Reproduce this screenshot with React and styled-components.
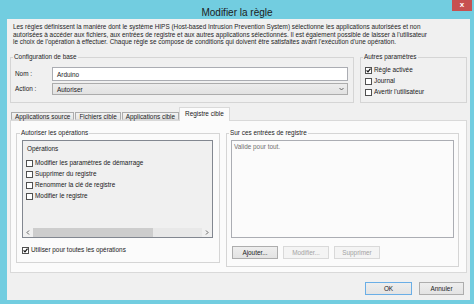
import React from "react";
import styled, { createGlobalStyle } from "styled-components";

const Global = createGlobalStyle`
  html, body { margin: 0; padding: 0; background: #72cde0; }
  #root { width: 474px; height: 304px; }
`;

const FONT = `"Liberation Sans", Arial, sans-serif`;

const Window = styled.div`
  width: 474px;
  height: 304px;
  box-sizing: border-box;
  background: #72cde0;
  display: flex;
  flex-direction: column;
  font-family: ${FONT};
  font-size: 6.4px;
  color: #1a1a1a;
`;

const TitleBar = styled.div`
  height: 19px;
  flex: none;
  display: grid;
  grid-template-columns: 1fr auto 1fr;
  align-items: start;
`;

const Title = styled.div`
  grid-column: 2;
  padding-top: 7px;
  font-size: 10px;
  line-height: 11px;
  color: #1c1c1c;
`;

const Close = styled.div`
  grid-column: 3;
  justify-self: end;
  margin-right: 2px;
  width: 20px;
  height: 11px;
  background: #c75050;
  color: #fff;
  font-size: 8px;
  font-weight: bold;
  line-height: 10px;
  text-align: center;
`;

const Body = styled.div`
  flex: 1;
  margin: 0 4px 4px 7px;
  background: #f0f0f0;
  padding: 4px 3px 0 3px;
  display: flex;
  flex-direction: column;
  min-height: 0;
`;

const Description = styled.p`
  margin: 0 0 0 3px;
  line-height: 7.5px;
  color: #1e1e1e;
`;

const TopRow = styled.div`
  display: flex;
  gap: 6px;
  margin-top: 7.5px;
  align-items: stretch;
`;

const Group = styled.fieldset`
  margin: 0;
  min-width: 0;
  border: 1px solid #d5d5d5;
  padding: ${(p) => p.$pad};
  flex: ${(p) => (p.$w ? "none" : "1")};
  width: ${(p) => (p.$w ? `${p.$w}px` : "auto")};
  box-sizing: border-box;
`;

const Legend = styled.legend`
  padding: 0 1px;
  margin-left: -2px;
  line-height: 8px;
  font-size: 6.4px;
  color: #1e1e1e;
`;

const FormGrid = styled.div`
  display: grid;
  grid-template-columns: 37px 1fr;
  row-gap: 2px;
  align-items: center;
`;

const Label = styled.span`
  line-height: 8px;
`;

const TextInput = styled.div`
  height: 14px;
  box-sizing: border-box;
  border: 1px solid #abadb3;
  background: #fff;
  padding: 0 4px;
  display: flex;
  align-items: center;
`;

const Select = styled.div`
  height: 12px;
  box-sizing: border-box;
  border: 1px solid #acacac;
  background: linear-gradient(#ececec, #e2e2e2);
  padding: 0 3px 0 4px;
  display: flex;
  align-items: center;
  justify-content: space-between;
`;

const CheckRow = styled.div`
  display: flex;
  align-items: center;
  gap: 2px;
  height: ${(p) => p.$h || 11}px;
  line-height: 8px;
`;

const Box = styled.span`
  width: 7px;
  height: 7px;
  box-sizing: border-box;
  border: 1px solid #505050;
  background: #fff;
  display: inline-flex;
  align-items: center;
  justify-content: center;
  flex: none;
`;

const Check = ({ checked }) => (
  <Box>
    {checked && (
      <svg width="5" height="5" viewBox="0 0 5 5">
        <path d="M0.6 2.4 L2 3.9 L4.5 0.7" fill="none" stroke="#111" strokeWidth="1.2" />
      </svg>
    )}
  </Box>
);

const TabStrip = styled.div`
  display: flex;
  align-items: flex-end;
  height: 13px;
  margin-top: 4px;
  padding-left: 1px;
  position: relative;
  z-index: 1;
`;

const Tab = styled.div`
  box-sizing: border-box;
  height: ${(p) => (p.$active ? 14 : 8)}px;
  margin-bottom: ${(p) => (p.$active ? -1 : 0)}px;
  margin-right: 1px;
  margin-left: ${(p) => (p.$active ? -1 : 0)}px;
  padding: ${(p) => (p.$active ? "2px 5px 0" : "0 3px")};
  border: 1px solid ${(p) => (p.$active ? "#d9d9d9" : "#acacac")};
  border-bottom: ${(p) => (p.$active ? "none" : "1px solid #d9d9d9")};
  background: ${(p) => (p.$active ? "#fbfbfb" : "linear-gradient(#f2f2f2, #e6e6e6)")};
  line-height: 7px;
  white-space: nowrap;
`;

const Panel = styled.div`
  height: 153px;
  box-sizing: border-box;
  border: 1px solid #d9d9d9;
  background: #fbfbfb;
  display: flex;
  gap: 6px;
  align-items: flex-start;
  padding: 8px 7px 0 5px;
`;

const ListBox = styled.div`
  height: 98px;
  box-sizing: border-box;
  border: 1px solid #828790;
  background: #f0f0f0;
  display: flex;
  flex-direction: column;
  padding-top: 4px;
`;

const ListHeader = styled.div`
  line-height: 8px;
  padding-left: 4px;
  margin-bottom: 4.5px;
`;

const ListItems = styled.div`
  padding-left: 3px;
`;

const ScrollBar = styled.div`
  margin-top: auto;
  height: 9px;
  display: flex;
  align-items: stretch;
  background: #e8e8e8;
`;

const ScrollArrow = styled.div`
  width: 10px;
  display: flex;
  align-items: center;
  justify-content: center;
  background: #f0f0f0;
`;

const Thumb = styled.div`
  width: 120px;
  background: #cdcdcd;
`;

const TextArea = styled.div`
  height: 98px;
  box-sizing: border-box;
  border: 1px solid #abadb3;
  background: #fbfbfb;
  padding: 2px 2px;
  line-height: 8px;
  color: #707070;
`;

const ButtonRow = styled.div`
  display: flex;
  gap: 5px;
  margin-top: 8px;
  padding-left: 1px;
`;

const Button = styled.div`
  width: ${(p) => p.$w || 46}px;
  height: 13px;
  box-sizing: border-box;
  border: 1px solid ${(p) => (p.$primary ? "#6aaee6" : p.$disabled ? "#d9d9d9" : "#adadad")};
  background: ${(p) => (p.$disabled ? "#f4f4f4" : "linear-gradient(#eeeeee, #e3e3e3)")};
  color: ${(p) => (p.$disabled ? "#a3a3a3" : "#1a1a1a")};
  display: flex;
  align-items: center;
  justify-content: center;
  line-height: 8px;
`;

const Footer = styled.div`
  margin-top: auto;
  display: flex;
  justify-content: flex-end;
  gap: 7px;
  padding: 9px 3px 5px 0;
`;

const Chevron = ({ dir = "down" }) => {
  const d =
    dir === "down" ? "M0.5 1 L2.5 3 L4.5 1" : dir === "left" ? "M3 0.5 L1 2.5 L3 4.5" : "M1 0.5 L3 2.5 L1 4.5";
  return (
    <svg width={dir === "down" ? 5 : 4} height={dir === "down" ? 4 : 5} viewBox={dir === "down" ? "0 0 5 4" : "0 0 4 5"}>
      <path d={d} fill="none" stroke="#555" strokeWidth="0.9" />
    </svg>
  );
};

export default function App() {
  return (
    <>
      <Global />
      <Window>
        <TitleBar>
          <Title>Modifier la règle</Title>
          <Close>x</Close>
        </TitleBar>
        <Body>
          <Description>
            Les règles définissent la manière dont le système HIPS (Host-based Intrusion Prevention System) sélectionne les applications autorisées et non
            <br />
            autorisées à accéder aux fichiers, aux entrées de registre et aux autres applications sélectionnés. Il est également possible de laisser à l'utilisateur
            <br />
            le choix de l'opération à effectuer. Chaque règle se compose de conditions qui doivent être satisfaites avant l'exécution d'une opération.
          </Description>

          <TopRow>
            <Group $pad="6px 5px 7px 4px">
              <Legend>Configuration de base</Legend>
              <FormGrid>
                <Label>Nom :</Label>
                <TextInput>Arduino</TextInput>
                <Label>Action :</Label>
                <Select>
                  <span>Autoriser</span>
                  <Chevron />
                </Select>
              </FormGrid>
            </Group>
            <Group $w={107} $pad="3.5px 4px 0 4px">
              <Legend>Autres paramètres</Legend>
              <CheckRow>
                <Check checked />
                <span>Règle activée</span>
              </CheckRow>
              <CheckRow>
                <Check />
                <span>Journal</span>
              </CheckRow>
              <CheckRow>
                <Check />
                <span>Avertir l'utilisateur</span>
              </CheckRow>
            </Group>
          </TopRow>

          <TabStrip>
            <Tab>Applications source</Tab>
            <Tab>Fichiers cible</Tab>
            <Tab>Applications cible</Tab>
            <Tab $active>Registre cible</Tab>
          </TabStrip>
          <Panel>
            <Group $w={204} $pad="3px 6px 7px 5px">
              <Legend>Autoriser les opérations</Legend>
              <ListBox>
                <ListHeader>Opérations</ListHeader>
                <ListItems>
                  <CheckRow>
                    <Check />
                    <span>Modifier les paramètres de démarrage</span>
                  </CheckRow>
                  <CheckRow>
                    <Check />
                    <span>Supprimer du registre</span>
                  </CheckRow>
                  <CheckRow>
                    <Check />
                    <span>Renommer la clé de registre</span>
                  </CheckRow>
                  <CheckRow>
                    <Check />
                    <span>Modifier le registre</span>
                  </CheckRow>
                </ListItems>
                <ScrollBar>
                  <ScrollArrow>
                    <Chevron dir="left" />
                  </ScrollArrow>
                  <Thumb />
                  <div style={{ flex: 1 }} />
                  <ScrollArrow>
                    <Chevron dir="right" />
                  </ScrollArrow>
                </ScrollBar>
              </ListBox>
              <CheckRow $h={10} style={{ marginTop: 7 }}>
                <Check checked />
                <span>Utiliser pour toutes les opérations</span>
              </CheckRow>
            </Group>
            <Group $pad="3px 4px 7px 4px">
              <Legend>Sur ces entrées de registre</Legend>
              <TextArea>Valide pour tout.</TextArea>
              <ButtonRow>
                <Button>Ajouter...</Button>
                <Button $disabled>Modifier...</Button>
                <Button $disabled>Supprimer</Button>
              </ButtonRow>
            </Group>
          </Panel>

          <Footer>
            <Button $w={47} $primary>OK</Button>
            <Button $w={45}>Annuler</Button>
          </Footer>
        </Body>
      </Window>
    </>
  );
}
